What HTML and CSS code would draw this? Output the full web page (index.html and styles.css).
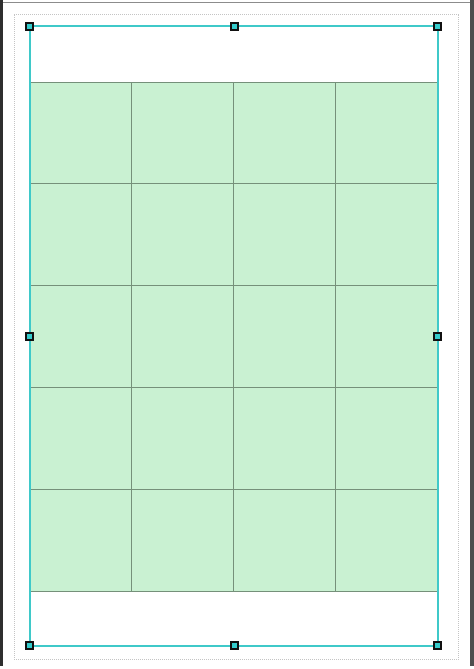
FILE: index.html
```html
<!DOCTYPE html>
<html>
<head>
<meta charset="utf-8">
<link rel="stylesheet" href="styles.css">
</head>
<body>
<div class="frame">
  <div class="topline"></div>
  <div class="sheet">
    <div class="grid">
      <div class="cell"></div><div class="cell"></div><div class="cell"></div><div class="cell"></div>
      <div class="cell"></div><div class="cell"></div><div class="cell"></div><div class="cell"></div>
      <div class="cell"></div><div class="cell"></div><div class="cell"></div><div class="cell"></div>
      <div class="cell"></div><div class="cell"></div><div class="cell"></div><div class="cell"></div>
      <div class="cell"></div><div class="cell"></div><div class="cell"></div><div class="cell"></div>
    </div>
  </div>
  <div class="selection">
    <span class="handle h-tl"></span>
    <span class="handle h-tm"></span>
    <span class="handle h-tr"></span>
    <span class="handle h-ml"></span>
    <span class="handle h-mr"></span>
    <span class="handle h-bl"></span>
    <span class="handle h-bm"></span>
    <span class="handle h-br"></span>
  </div>
</div>
</body>
</html>
```
FILE: styles.css
```css
html, body {
  margin: 0;
  padding: 0;
  background: #ffffff;
}
.frame {
  position: relative;
  width: 474px;
  height: 666px;
  box-sizing: border-box;
  padding-top: 2px;
  border-left: 3px solid #2e2e2e;
  border-right: 4px solid #4e4e4e;
  background: #ffffff;
}
.topline {
  height: 1px;
  background: #8c8c8c;
}
.sheet {
  margin: 11px 0 0 11px;
  width: 445px;
  height: 646px;
  box-sizing: border-box;
  border: 1px dotted #c4c4c4;
  padding: 67px 0 0 15px;
}
.grid {
  display: grid;
  grid-template-columns: 100px 101px 101px 101px;
  grid-template-rows: 100px 101px 101px 101px 101px;
  gap: 1px;
  width: max-content;
  background: #75907a;
  border: 1px solid #75907a;
}
.cell {
  background: #c9f1d2;
}
.selection {
  position: absolute;
  left: 26px;
  top: 25px;
  width: 410px;
  height: 622px;
  box-sizing: border-box;
  border: 2px solid #3fc9c9;
}
.handle {
  position: absolute;
  width: 9px;
  height: 9px;
  box-sizing: border-box;
  border: 2px solid #111111;
  background: #35cccc;
}
.h-tl { left: -6px; top: -5px; }
.h-tm { left: 199px; top: -5px; }
.h-tr { right: -5px; top: -5px; }
.h-ml { left: -6px; top: 305px; }
.h-mr { right: -5px; top: 305px; }
.h-bl { left: -6px; bottom: -5px; }
.h-bm { left: 199px; bottom: -5px; }
.h-br { right: -5px; bottom: -5px; }
```
